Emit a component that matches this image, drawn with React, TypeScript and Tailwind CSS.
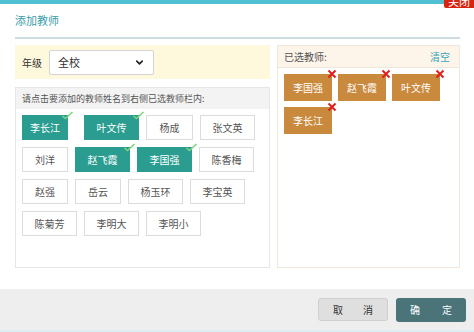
import React from 'react';
import { ChevronDown } from 'lucide-react';

const teachers = [
  { name: '李长江', w: 'w-[46px]', selected: true, extra: 'mr-[9px]' },
  { name: '叶文传', w: 'w-[55px]', selected: true },
  { name: '杨成', w: 'w-[47px]' },
  { name: '张文英', w: 'w-[55px]' },
  { name: '刘洋', w: 'w-[46px]' },
  { name: '赵飞霞', w: 'w-[55px]', selected: true },
  { name: '李国强', w: 'w-[55px]', selected: true },
  { name: '陈香梅', w: 'w-[55px]' },
  { name: '赵强', w: 'w-[46px]' },
  { name: '岳云', w: 'w-[46px]' },
  { name: '杨玉环', w: 'w-[55px]' },
  { name: '李宝英', w: 'w-[55px]' },
  { name: '陈菊芳', w: 'w-[55px]' },
  { name: '李明大', w: 'w-[55px]' },
  { name: '李明小', w: 'w-[55px]' },
];

const chosen = ['李国强', '赵飞霞', '叶文传', '李长江'];

const Check = () => (
  <svg className="absolute right-[-7px] top-[-5px]" width="13" height="9" viewBox="0 0 13 9">
    <path d="M1.5 5 L4.5 7.5 L11.5 1" fill="none" stroke="#7fd47f" strokeWidth="1.6" />
  </svg>
);

const Cross = () => (
  <svg className="absolute right-[-5px] top-[-5px]" width="10" height="10" viewBox="0 0 10 10">
    <path d="M1.5 1.5 L8.5 8.5 M8.5 1.5 L1.5 8.5" stroke="#e0201c" strokeWidth="2" />
  </svg>
);

const App: React.FC = () => {
  return (
    <div
      className="relative w-[474px] h-[332px] overflow-hidden bg-white flex flex-col"
      style={{ fontFamily: '"Noto Sans CJK SC", "Noto Sans", sans-serif' }}
    >
      <div className="h-[4px] bg-[#4fbfd1]" />
      <div className="absolute right-0 top-[-5px] bg-[#d9230f] text-white text-[11px] leading-[13px] px-[4px] rounded-bl-[2px]">
        关闭
      </div>

      <div className="h-[33px] px-[15px] flex items-center text-[11px] text-[#3a9caa]">添加教师</div>
      <div className="mx-[15px] mr-[14px] h-[2px] bg-[#cddde1]" />

      <div className="flex px-[15px] pr-[14px] gap-[7px] mt-[6px]">
        {/* left */}
        <div className="w-[255px] flex flex-col">
          <div className="h-[34px] bg-[#fef9dd] flex items-center px-[7px] gap-[7px]">
            <span className="text-[10px] text-[#333]">年级</span>
            <div className="w-[105px] h-[25px] bg-white border border-[#d4d4d4] rounded-[2px] flex items-center justify-between pl-[8px] pr-[8px]">
              <span className="text-[11px] text-[#333]">全校</span>
              <ChevronDown size={11} strokeWidth={3.5} color="#222" />
            </div>
          </div>
          <div className="mt-[8px] h-[181px] border border-[#e6e6e6] flex flex-col">
            <div className="h-[21px] bg-[#f3f3f3] flex items-center px-[6px] text-[9px] text-[#555]">
              请点击要添加的教师姓名到右侧已选教师栏内:
            </div>
            <div className="flex flex-wrap gap-x-[7px] gap-y-[7px] px-[6px] pt-[6px]">
              {teachers.map((t) => (
                <div
                  key={t.name}
                  className={`relative h-[25px] ${t.w} ${t.extra ?? ''} flex items-center justify-center text-[10px] border ${
                    t.selected ? 'bg-[#2a9d90] border-[#2a9d90] text-white' : 'bg-white border-[#dcdcdc] text-[#555]'
                  }`}
                >
                  {t.name}
                  {t.selected && <Check />}
                </div>
              ))}
            </div>
          </div>
        </div>

        {/* right */}
        <div className="flex-1 h-[223px] border border-[#efe7da] flex flex-col">
          <div className="h-[22px] bg-[#fdf4ea] border-b border-[#efe7da] flex items-center justify-between px-[6px] pr-[9px] text-[10px]">
            <span className="text-[#555]">已选教师:</span>
            <span className="text-[#3aa8bb]">清空</span>
          </div>
          <div className="flex flex-wrap gap-[6px] px-[6px] pt-[6px]">
            {chosen.map((n) => (
              <div
                key={n}
                className="relative w-[48px] h-[27px] bg-[#c98a3e] text-white text-[10px] flex items-center justify-center"
              >
                {n}
                <Cross />
              </div>
            ))}
          </div>
        </div>
      </div>

      <div className="mt-[21px] h-[41px] bg-[#efeeee] flex items-center justify-end gap-[8px] pr-[8px]">
        <button className="w-[70px] h-[23px] bg-[#dfdfdf] border border-[#cfcfcf] rounded-[3px] text-[10px] text-[#333] flex items-center justify-between px-[14px]">
          <span>取</span>
          <span>消</span>
        </button>
        <button className="w-[70px] h-[24px] bg-[#4b7479] rounded-[3px] text-[10px] text-white flex items-center justify-between px-[14px]">
          <span>确</span>
          <span>定</span>
        </button>
      </div>
      <div className="flex-1 bg-[#d8eef2]" />
    </div>
  );
};

export default App;
